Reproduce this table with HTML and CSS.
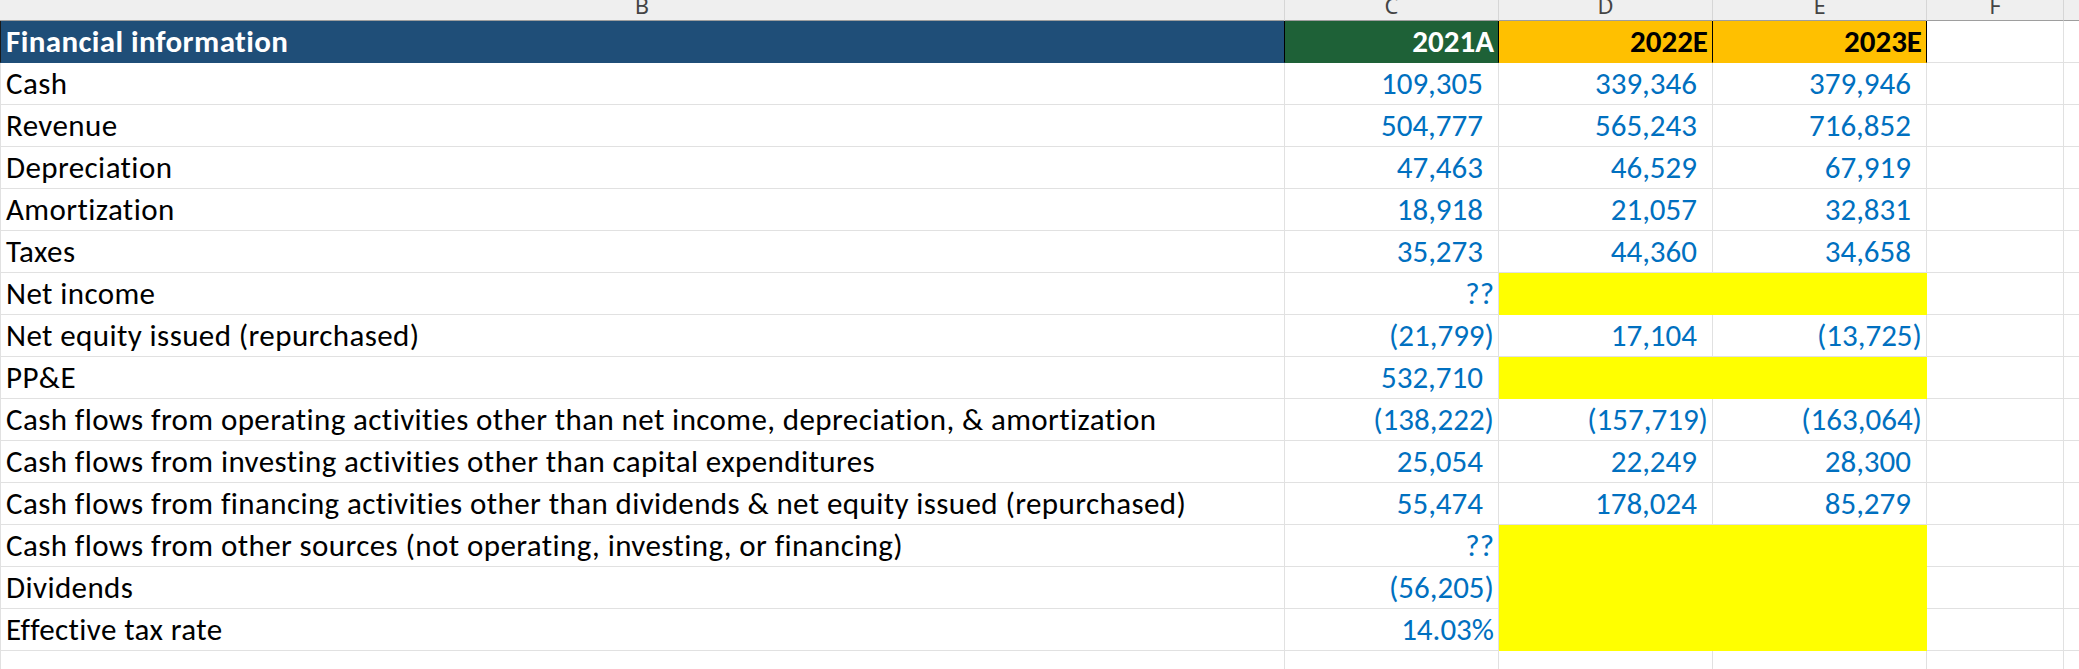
FILE: index.html
```html
<!DOCTYPE html>
<html lang="en">
<head>
<meta charset="utf-8">
<title>Financial information</title>
<link rel="stylesheet" href="styles.css">
</head>
<body>
<div class="sheet">
  <div class="hd first">B</div>
  <div class="hd">C</div>
  <div class="hd">D</div>
  <div class="hd">E</div>
  <div class="hd">F</div>
  <div class="hd last"></div>

  <div class="c lbl title-b">Financial information</div>
  <div class="c num title-g">2021A</div>
  <div class="c num title-o">2022E</div>
  <div class="c num title-o">2023E</div>
  <div class="c"></div>
  <div class="c last"></div>

  <div class="c lbl">Cash</div>
  <div class="c num v pos">109,305</div>
  <div class="c num v pos">339,346</div>
  <div class="c num v pos">379,946</div>
  <div class="c"></div><div class="c last"></div>

  <div class="c lbl">Revenue</div>
  <div class="c num v pos">504,777</div>
  <div class="c num v pos">565,243</div>
  <div class="c num v pos">716,852</div>
  <div class="c"></div><div class="c last"></div>

  <div class="c lbl">Depreciation</div>
  <div class="c num v pos">47,463</div>
  <div class="c num v pos">46,529</div>
  <div class="c num v pos">67,919</div>
  <div class="c"></div><div class="c last"></div>

  <div class="c lbl">Amortization</div>
  <div class="c num v pos">18,918</div>
  <div class="c num v pos">21,057</div>
  <div class="c num v pos">32,831</div>
  <div class="c"></div><div class="c last"></div>

  <div class="c lbl">Taxes</div>
  <div class="c num v pos">35,273</div>
  <div class="c num v pos">44,360</div>
  <div class="c num v pos">34,658</div>
  <div class="c"></div><div class="c last"></div>

  <div class="c lbl">Net income</div>
  <div class="c num v">??</div>
  <div class="c hl"></div>
  <div class="c hl"></div>
  <div class="c"></div><div class="c last"></div>

  <div class="c lbl">Net equity issued (repurchased)</div>
  <div class="c num v">(21,799)</div>
  <div class="c num v pos">17,104</div>
  <div class="c num v">(13,725)</div>
  <div class="c"></div><div class="c last"></div>

  <div class="c lbl">PP&amp;E</div>
  <div class="c num v pos">532,710</div>
  <div class="c hl"></div>
  <div class="c hl"></div>
  <div class="c"></div><div class="c last"></div>

  <div class="c lbl">Cash flows from operating activities other than net income, depreciation, &amp; amortization</div>
  <div class="c num v">(138,222)</div>
  <div class="c num v">(157,719)</div>
  <div class="c num v">(163,064)</div>
  <div class="c"></div><div class="c last"></div>

  <div class="c lbl">Cash flows from investing activities other than capital expenditures</div>
  <div class="c num v pos">25,054</div>
  <div class="c num v pos">22,249</div>
  <div class="c num v pos">28,300</div>
  <div class="c"></div><div class="c last"></div>

  <div class="c lbl">Cash flows from financing activities other than dividends &amp; net equity issued (repurchased)</div>
  <div class="c num v pos">55,474</div>
  <div class="c num v pos">178,024</div>
  <div class="c num v pos">85,279</div>
  <div class="c"></div><div class="c last"></div>

  <div class="c lbl">Cash flows from other sources (not operating, investing, or financing)</div>
  <div class="c num v">??</div>
  <div class="c hl"></div>
  <div class="c hl"></div>
  <div class="c"></div><div class="c last"></div>

  <div class="c lbl">Dividends</div>
  <div class="c num v">(56,205)</div>
  <div class="c hl"></div>
  <div class="c hl"></div>
  <div class="c"></div><div class="c last"></div>

  <div class="c lbl">Effective tax rate</div>
  <div class="c num v">14.03%</div>
  <div class="c hl"></div>
  <div class="c hl"></div>
  <div class="c"></div><div class="c last"></div>

  <div class="c lbl"></div>
  <div class="c"></div>
  <div class="c"></div>
  <div class="c"></div>
  <div class="c"></div><div class="c last"></div>
</div>
</body>
</html>
```

FILE: styles.css
```css
html, body {
  margin: 0;
  padding: 0;
  background: #ffffff;
  overflow: hidden;
}

.sheet {
  display: grid;
  grid-template-columns: 1285px 214px 214px 214px 137px 1fr;
  grid-template-rows: 21px;
  grid-auto-rows: 42px;
  width: 2079px;
  font-family: "Carlito", "Calibri", "Lato", sans-serif;
  font-size: 31px;
  font-variant-ligatures: none;
}

.hd {
  box-sizing: border-box;
  background: #efefef;
  border-right: 1px solid #d6d6d6;
  border-bottom: 1px solid #9e9e9e;
  overflow: hidden;
  display: flex;
  align-items: flex-end;
  justify-content: center;
  font-family: "Noto Sans", "Open Sans", sans-serif;
  font-size: 22px;
  line-height: 1;
  color: #444444;
  padding-bottom: 4px;
}

.c {
  box-sizing: border-box;
  border-right: 1px solid #e1e1e1;
  border-bottom: 1px solid #e1e1e1;
  display: flex;
  align-items: flex-end;
  line-height: 1;
  padding: 0 4px 5px 5px;
  white-space: nowrap;
  color: #000000;
}

.c.last {
  border-right: none;
}

.hd.last {
  border-right: none;
}

.lbl {
  border-left: 1px solid #e1e1e1;
  padding-left: 5px;
  letter-spacing: 0.4px;
}

.num {
  justify-content: flex-end;
}

.v {
  color: #0070c0;
}

.pos {
  padding-right: 15px;
}

.title-b {
  background: #1f4e78;
  color: #ffffff;
  font-weight: bold;
  border-left: 1px solid #1a1a1a;
  border-right: 1px solid #000000;
  border-bottom-color: #1f4e78;
}

.title-g {
  background: #1e6137;
  color: #ffffff;
  font-weight: bold;
  border-right: 1px solid #000000;
  border-bottom-color: #1e6137;
}

.title-o {
  background: #ffc000;
  color: #000000;
  font-weight: bold;
  border-right: 1px solid #000000;
  border-bottom-color: #ffc000;
}

.hl {
  background: #ffff00;
  border-right-color: #ffff00;
  border-bottom-color: #ffff00;
}
```
